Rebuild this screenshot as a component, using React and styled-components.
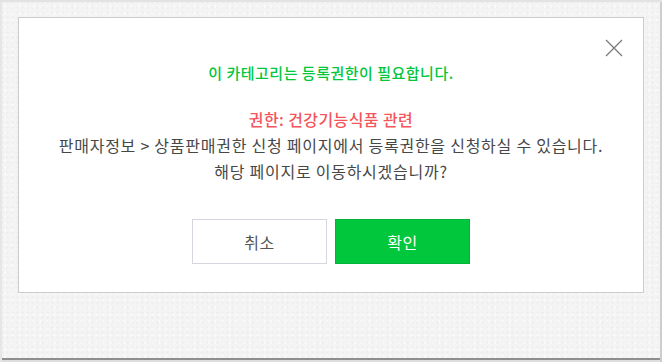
import React from "react";
import styled, { createGlobalStyle } from "styled-components";

const Global = createGlobalStyle`
  html, body { margin: 0; padding: 0; }
  body { font-family: "Noto Sans CJK KR", "Noto Sans", sans-serif; }
  * { box-sizing: border-box; }
`;

const Frame = styled.div`
  width: 662px;
  height: 362px;
  padding: 17px 0 0 18px;
  background-color: #f4f4f4;
  background-image:
    radial-gradient(rgba(0,0,0,0.018) 1px, transparent 1.5px),
    radial-gradient(rgba(255,255,255,0.5) 1px, transparent 1.5px);
  background-size: 5px 5px, 7px 7px;
  background-position: 0 0, 2px 3px;
  box-shadow:
    inset 0 2px 0 #e2e2e2,
    inset 2px 0 0 #e6e6e6,
    inset -2px 0 0 #cdcdcd,
    inset 0 -2px 0 #dedede,
    inset 0 -4px 0 #8e8e8e;
`;

const Dialog = styled.div`
  position: relative;
  width: 626px;
  height: 276px;
  background: #fff;
  border: 1px solid #cccccc;
  display: flex;
  flex-direction: column;
  align-items: center;
  padding-top: 42px;
`;

const Close = styled.button`
  position: absolute;
  top: 20px;
  right: 19px;
  width: 20px;
  height: 20px;
  padding: 0;
  border: 0;
  background: none;
  cursor: pointer;
  display: flex;
  align-items: center;
  justify-content: center;
`;

const Line = styled.p`
  margin: ${(p) => p.$mt || 0}px 0 0;
  font-size: ${(p) => p.$size || 16}px;
  letter-spacing: ${(p) => p.$ls ?? 0.75}px;
  line-height: 26px;
  text-align: center;
  color: ${(p) => p.$color || "#474747"};
  font-weight: ${(p) => (p.$bold ? 500 : 400)};
  white-space: nowrap;
`;

const Buttons = styled.div`
  display: flex;
  gap: 8px;
  margin-top: 35px;
`;

const Button = styled.button`
  width: 135px;
  height: 45px;
  font-family: inherit;
  font-size: 16px;
  letter-spacing: 0.5px;
  border: 1px solid ${(p) => (p.$primary ? "#00b33a" : "#d6d6de")};
  background: ${(p) => (p.$primary ? "#00c73c" : "#fff")};
  color: ${(p) => (p.$primary ? "#fff" : "#555")};
  cursor: pointer;
`;

export default function App() {
  return (
    <>
      <Global />
      <Frame>
        <Dialog>
          <Close aria-label="닫기">
            <svg width="18" height="18" viewBox="0 0 18 18">
              <path d="M1 1 L17 17 M17 1 L1 17" stroke="#777" strokeWidth="1.2" fill="none" />
            </svg>
          </Close>
          <Line $color="#00c73c" $bold $size={15} $ls={0.5}>이 카테고리는 등록권한이 필요합니다.</Line>
          <Line $color="#f4555c" $bold $size={16} $ls={0.4} $mt={20}>권한: 건강기능식품 관련</Line>
          <Line>판매자정보 &gt; 상품판매권한 신청 페이지에서 등록권한을 신청하실 수 있습니다.</Line>
          <Line>해당 페이지로 이동하시겠습니까?</Line>
          <Buttons>
            <Button>취소</Button>
            <Button $primary>확인</Button>
          </Buttons>
        </Dialog>
      </Frame>
    </>
  );
}
